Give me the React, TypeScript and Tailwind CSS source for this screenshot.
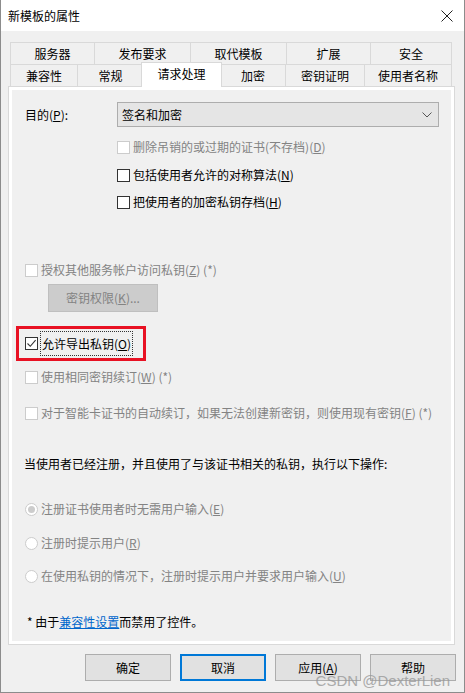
import React from 'react';

const font = { fontFamily: '"Microsoft YaHei UI", "Noto Sans CJK SC", "Liberation Sans", sans-serif' };

function Label({ text, k, tail }: { text: string; k?: string; tail?: string }) {
  return (
    <span>
      {text}
      {k && (
        <>
          (<u>{k}</u>)
        </>
      )}
      {tail}
    </span>
  );
}

function Check({ checked, disabled, children }: { checked?: boolean; disabled?: boolean; children: React.ReactNode }) {
  return (
    <div className={`flex items-center h-[18px] ${disabled ? 'text-[#838383]' : 'text-black'}`}>
      <span
        className={`w-[13px] h-[13px] shrink-0 border bg-white flex items-center justify-center ${
          disabled ? 'border-[#cccccc]' : 'border-[#333333]'
        }`}
      >
        {checked && (
          <svg width="11" height="11" viewBox="0 0 11 11">
            <path d="M1.5 5.5 L4.3 8.3 L9.6 2.2" fill="none" stroke="#333" strokeWidth="1.1" />
          </svg>
        )}
      </span>
      <span className="ml-[3px]">{children}</span>
    </div>
  );
}

function Radio({ selected, children }: { selected?: boolean; children: React.ReactNode }) {
  return (
    <div className="flex items-center h-[18px] text-[#838383]">
      <span className="w-[13px] h-[13px] shrink-0 rounded-full border border-[#cccccc] bg-white flex items-center justify-center">
        {selected && <span className="w-[7px] h-[7px] rounded-full bg-[#cccccc]" />}
      </span>
      <span className="ml-[3px]">{children}</span>
    </div>
  );
}

const row1 = [
  { t: '服务器', w: 84 },
  { t: '发布要求', w: 96 },
  { t: '取代模板', w: 96 },
  { t: '扩展', w: 84 },
  { t: '安全', w: 82 },
];

const row2 = [
  { t: '兼容性', w: 67 },
  { t: '常规', w: 66 },
  { t: '请求处理', w: 77, sel: true },
  { t: '加密', w: 65 },
  { t: '密钥证明', w: 79 },
  { t: '使用者名称', w: 88 },
];

function TabRow({ tabs }: { tabs: { t: string; w: number; sel?: boolean }[] }) {
  return (
    <div className="flex h-[22px]">
      {tabs.map((tab, i) =>
        tab.sel ? (
          <div
            key={tab.t}
            className="relative z-10 -mx-[2px] -mt-[2px] -mb-[1px] h-[25px] bg-white border-x border-t border-[#d9d9d9] flex items-center justify-center pb-[3px]"
            style={{ width: tab.w + 4 }}
          >
            {tab.t}
          </div>
        ) : (
          <div
            key={tab.t}
            className={`h-[22px] bg-[#f0f0f0] border-l border-t border-[#d9d9d9] flex items-center justify-center ${
              i === tabs.length - 1 ? 'border-r' : ''
            }`}
            style={{ width: tab.w }}
          >
            {tab.t}
          </div>
        )
      )}
    </div>
  );
}

function DlgButton({ children, focused }: { children: React.ReactNode; focused?: boolean }) {
  return (
    <div
      className={`w-[86px] h-[27px] bg-[#e1e1e1] flex items-center justify-center ${
        focused ? 'border-2 border-[#0078d7]' : 'border border-[#adadad]'
      }`}
    >
      {children}
    </div>
  );
}

export default function App() {
  return (
    <div
      className="relative w-[465px] h-[693px] bg-[#f0f0f0] border-x border-b border-[#8c8c8c] text-[12px] leading-none text-black flex flex-col overflow-hidden"
      style={font}
    >
      <div className="h-[31px] bg-white flex items-center justify-between pl-[7px] pr-[11px] shrink-0">
        <span className="text-[12px]">新模板的属性</span>
        <svg width="12" height="12" viewBox="0 0 12 12">
          <path d="M0.5 0.5 L11.5 11.5 M11.5 0.5 L0.5 11.5" stroke="#222" strokeWidth="1" />
        </svg>
      </div>

      <div className="pl-[9px] pt-[11px] flex flex-col">
        <TabRow tabs={row1} />
        <TabRow tabs={row2} />
      </div>

      <div className="ml-[7px] w-[447px] h-[559px] border border-[#d9d9d9] bg-white p-[3px]">
        <div className="h-full bg-[#f0f0f0] pl-[13px] pt-[12px] flex flex-col">
          <div className="flex items-center h-[25px]">
            <span className="w-[92px]">
              目的(<u>P</u>):
            </span>
            <div className="w-[322px] h-[25px] bg-[#e5e5e5] border border-[#adadad] flex items-center justify-between pl-[4px] pr-[6px]">
              <span>签名和加密</span>
              <svg width="10" height="6" viewBox="0 0 10 6">
                <path d="M0.5 0.5 L5 5 L9.5 0.5" fill="none" stroke="#555" strokeWidth="1" />
              </svg>
            </div>
          </div>

          <div className="ml-[92px] mt-[11px]">
            <Check disabled>
              <Label text="删除吊销的或过期的证书(不存档)" k="D" />
            </Check>
          </div>
          <div className="ml-[92px] mt-[10px]">
            <Check>
              <Label text="包括使用者允许的对称算法" k="N" />
            </Check>
          </div>
          <div className="ml-[92px] mt-[9px]">
            <Check>
              <Label text="把使用者的加密私钥存档" k="H" />
            </Check>
          </div>

          <div className="mt-[50px]">
            <Check disabled>
              <Label text="授权其他服务帐户访问私钥" k="Z" tail=" (*)" />
            </Check>
          </div>
          <div className="ml-[23px] mt-[5px] w-[110px] h-[28px] bg-[#cccccc] border border-[#bfbfbf] text-[#838383] flex items-center justify-center">
            <span>
              密钥权限(<u>K</u>)...
            </span>
          </div>

          <div className="-ml-[9px] mt-[14px] w-[130px] h-[35px] border-[3px] border-[#e81123] pl-[6px] flex items-center">
            <Check checked>
              <span className="outline-1 outline-dotted outline-[#333] px-[1px] py-[3px]">
                允许导出私钥(<u>O</u>)
              </span>
            </Check>
          </div>

          <div className="mt-[7px]">
            <Check disabled>
              <Label text="使用相同密钥续订" k="W" tail=" (*)" />
            </Check>
          </div>
          <div className="mt-[18px]">
            <Check disabled>
              <Label text="对于智能卡证书的自动续订，如果无法创建新密钥，则使用现有密钥" k="F" tail=" (*)" />
            </Check>
          </div>

          <div className="mt-[33px] h-[18px] flex items-center -ml-[1px]">
            当使用者已经注册，并且使用了与该证书相关的私钥，执行以下操作:
          </div>

          <div className="mt-[27px]">
            <Radio selected>
              <Label text="注册证书使用者时无需用户输入" k="E" />
            </Radio>
          </div>
          <div className="mt-[16px]">
            <Radio>
              <Label text="注册时提示用户" k="R" />
            </Radio>
          </div>
          <div className="mt-[15px]">
            <Radio>
              <Label text="在使用私钥的情况下，注册时提示用户并要求用户输入" k="U" />
            </Radio>
          </div>

          <div className="mt-[28px] ml-[2px] h-[18px] flex items-center">
            <span>* 由于</span>
            <span className="text-[#0066cc] underline">兼容性设置</span>
            <span>而禁用了控件。</span>
          </div>
        </div>
      </div>

      <div className="mt-[9px] flex justify-end gap-[9px] pr-[8px]">
        <DlgButton>确定</DlgButton>
        <DlgButton focused>取消</DlgButton>
        <DlgButton>
          <span>
            应用(<u>A</u>)
          </span>
        </DlgButton>
        <DlgButton>帮助</DlgButton>
      </div>

      <div
        className="absolute right-[14px] bottom-[4px] text-[15px] text-[#9a9a9a] opacity-80"
        style={{ fontFamily: '"Liberation Sans", Arial, sans-serif' }}
      >
        CSDN @DexterLien
      </div>
    </div>
  );
}
